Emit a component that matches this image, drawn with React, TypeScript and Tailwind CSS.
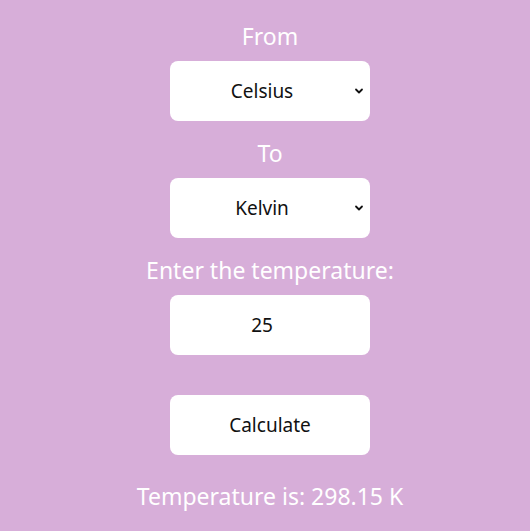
import React, { useState } from 'react';

const font = { fontFamily: '"Noto Sans", "Open Sans", sans-serif' };

const Chevron = () => (
  <svg
    className="pointer-events-none absolute right-[6px] top-1/2 -translate-y-1/2"
    width="10"
    height="10"
    viewBox="0 0 10 10"
    fill="none"
  >
    <path d="M2 3.5 L5 6.5 L8 3.5" stroke="#111" strokeWidth="1.8" strokeLinecap="round" strokeLinejoin="round" />
  </svg>
);

const Select: React.FC<{ value: string; onChange: (v: string) => void }> = ({ value, onChange }) => (
  <div className="relative h-[60px] w-[200px]">
    <select
      value={value}
      onChange={(e) => onChange(e.target.value)}
      className="h-full w-full appearance-none rounded-[8px] bg-white pl-0 pr-[16px] text-center text-[19px] text-[#111] outline-none"
      style={{ textAlignLast: 'center' }}
    >
      <option>Celsius</option>
      <option>Fahrenheit</option>
      <option>Kelvin</option>
    </select>
    <Chevron />
  </div>
);

export default function App() {
  const [from, setFrom] = useState('Celsius');
  const [to, setTo] = useState('Kelvin');
  const [temp, setTemp] = useState('25');

  return (
    <div className="min-h-[531px] w-full bg-[#d7aed9]" style={font}>
      <div className="flex flex-col items-center pl-[10px]">
        <label className="mt-[20px] mb-[8px] text-[23px] leading-[33px] text-white">From</label>
        <Select value={from} onChange={setFrom} />

        <label className="mt-[16px] mb-[8px] text-[23px] leading-[33px] text-white">To</label>
        <Select value={to} onChange={setTo} />

        <label className="mt-[16px] mb-[8px] text-[23px] leading-[33px] text-white">Enter the temperature:</label>
        <input
          value={temp}
          onChange={(e) => setTemp(e.target.value)}
          className="h-[60px] w-[200px] rounded-[8px] bg-white pl-0 pr-[16px] text-center text-[19px] text-[#111] outline-none"
        />

        <button className="mt-[40px] h-[60px] w-[200px] rounded-[8px] bg-white text-[19px] text-[#111]">
          Calculate
        </button>

        <p className="mt-[25px] text-[23px] leading-[33px] text-white">Temperature is: 298.15 K</p>
      </div>
    </div>
  );
}
